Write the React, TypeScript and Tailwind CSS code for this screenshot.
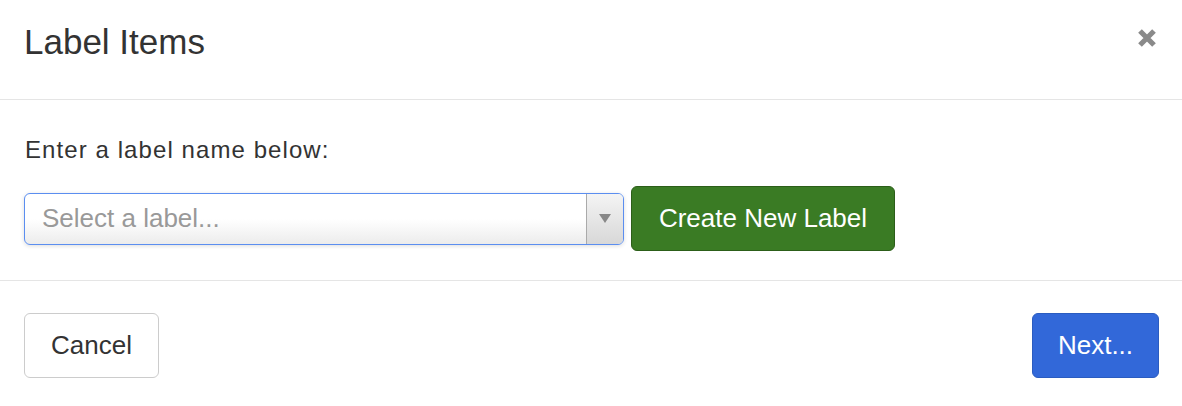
import React from "react";

export default function App() {
  return (
    <div
      className="w-[1182px] h-[406px] bg-white text-[#333] flex flex-col"
      style={{ fontFamily: '"Liberation Sans", Arial, sans-serif' }}
    >
      <div className="h-[100px] flex items-start justify-between pl-[24px] pr-[25px] border-b border-[#e5e5e5] shrink-0">
        <h1 className="text-[35px] leading-[40px] text-[#333] mt-[22px]">Label Items</h1>
        <button className="w-[20px] h-[20px] mt-[28px] flex items-center justify-center" aria-label="Close">
          <svg width="20" height="20" viewBox="0 0 20 20">
            <path d="M3 3 L17 17 M17 3 L3 17" stroke="#8a8a8a" strokeWidth="5.2" strokeLinecap="butt" />
          </svg>
        </button>
      </div>
      <div className="pt-[30px] pb-[29px] px-[24px] border-b border-[#e5e5e5] shrink-0">
        <div className="h-[40px] leading-[40px] text-[24px] tracking-[0.045em] pl-[1px]">Enter a label name below:</div>
        <div className="mt-[16px] h-[65px] flex items-center gap-[7px]">
          <div className="w-[600px] h-[52px] rounded-[6px] border-[1.5px] border-[#5b8ef0] bg-gradient-to-b from-white from-50% to-[#ececec] shadow-[0_1px_4px_rgba(0,0,0,0.14)] flex items-stretch overflow-hidden">
            <div className="flex-1 flex items-center pl-[17px] text-[26px] text-[#999]">Select a label...</div>
            <div className="w-[37px] border-l border-[#aaa] bg-gradient-to-b from-[#f4f4f4] to-[#d8d8d8] flex items-center justify-center">
              <svg width="12" height="9" viewBox="0 0 12 9">
                <path d="M0 0 L12 0 L6 9 Z" fill="#888" />
              </svg>
            </div>
          </div>
          <button className="w-[264px] h-[65px] rounded-[6px] bg-[#3a7b24] border border-[#2c5e19] text-white text-[26px]">
            Create New Label
          </button>
        </div>
      </div>
      <div className="flex-1 flex items-start justify-between pt-[32px] pl-[24px] pr-[23px]">
        <button className="w-[135px] h-[65px] rounded-[6px] border border-[#cccccc] bg-white text-[26px] text-[#333]">
          Cancel
        </button>
        <button className="w-[127px] h-[65px] rounded-[6px] border border-[#2b5cc0] bg-[#3268d9] text-[26px] text-white">
          Next...
        </button>
      </div>
    </div>
  );
}
